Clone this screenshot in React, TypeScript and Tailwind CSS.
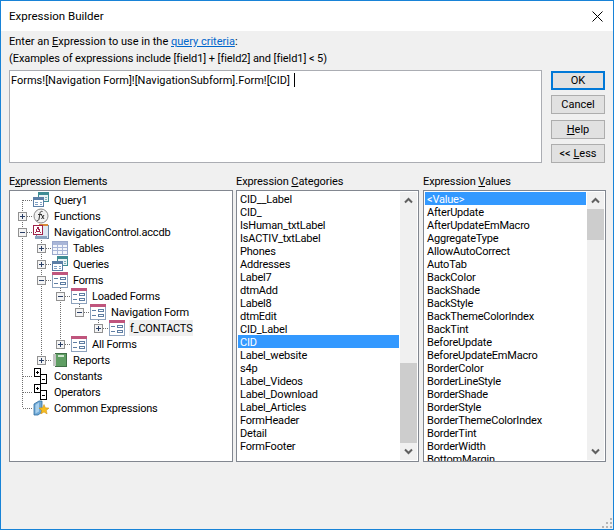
const fontStack = "font-['Roboto',sans-serif]";

const categories = [
  "CID__Label", "CID_", "IsHuman_txtLabel", "IsACTIV_txtLabel", "Phones", "Addresses", "Label7", "dtmAdd",
  "Label8", "dtmEdit", "CID_Label", "CID", "Label_website", "s4p", "Label_Videos", "Label_Download",
  "Label_Articles", "FormHeader", "Detail", "FormFooter",
];

const values = [
  "<Value>", "AfterUpdate", "AfterUpdateEmMacro", "AggregateType", "AllowAutoCorrect", "AutoTab", "BackColor",
  "BackShade", "BackStyle", "BackThemeColorIndex", "BackTint", "BeforeUpdate", "BeforeUpdateEmMacro", "BorderColor",
  "BorderLineStyle", "BorderShade", "BorderStyle", "BorderThemeColorIndex", "BorderTint", "BorderWidth", "BottomMargin",
];

type Kind = "query" | "fx" | "db" | "table" | "form" | "report" | "const" | "star";

const tree: { label: string; level: number; kind: Kind; exp?: "+" | "-"; active?: boolean }[] = [
  { label: "Query1", level: 0, kind: "query" },
  { label: "Functions", level: 0, kind: "fx", exp: "+" },
  { label: "NavigationControl.accdb", level: 0, kind: "db", exp: "-" },
  { label: "Tables", level: 1, kind: "table", exp: "+" },
  { label: "Queries", level: 1, kind: "query", exp: "+" },
  { label: "Forms", level: 1, kind: "form", exp: "-" },
  { label: "Loaded Forms", level: 2, kind: "form", exp: "-" },
  { label: "Navigation Form", level: 3, kind: "form", exp: "-" },
  { label: "f_CONTACTS", level: 4, kind: "form", exp: "+", active: true },
  { label: "All Forms", level: 2, kind: "form", exp: "+" },
  { label: "Reports", level: 1, kind: "report", exp: "+" },
  { label: "Constants", level: 0, kind: "const" },
  { label: "Operators", level: 0, kind: "const" },
  { label: "Common Expressions", level: 0, kind: "star" },
];

const indent = ["pl-[8px]", "pl-[27px]", "pl-[46px]", "pl-[65px]", "pl-[84px]"];

function Icon({ kind }: { kind: Kind }) {
  if (kind === "query") {
    return (
      <svg width="16" height="16" viewBox="0 0 16 16" shapeRendering="crispEdges">
        <rect x="5.5" y="0.5" width="10" height="9" fill="#eaf3f5" stroke="#3f8c94" />
        <rect x="6" y="1" width="9" height="2" fill="#3f8c94" />
        <path d="M12 5h2M12 7h2" stroke="#7fb0b6" />
        <rect x="0.5" y="5.5" width="10" height="9" fill="#fff" stroke="#5b7ea6" />
        <rect x="1" y="6" width="9" height="2" fill="#5b7ea6" />
        <path d="M2 10h3M7 10h2M2 12h3M7 12h2" stroke="#7fa0c4" />
      </svg>
    );
  }
  if (kind === "fx") {
    return (
      <svg width="16" height="16" viewBox="0 0 16 16">
        <circle cx="8" cy="8" r="7" fill="#f2f2f2" stroke="#8a8a8a" />
        <path d="M9.5 3.5C8 3 7.2 3.8 7 5.2L6 11c-.2 1.2-1 1.8-2.2 1.5M5 6.5h4M8.5 7l2.5 4M11 7l-2.5 4" fill="none" stroke="#333" strokeWidth="1" />
      </svg>
    );
  }
  if (kind === "db") {
    return (
      <svg width="16" height="16" viewBox="0 0 16 16" shapeRendering="crispEdges">
        <rect x="3.5" y="1.5" width="12" height="13" fill="#dfe8f2" stroke="#6d87a6" />
        <rect x="6" y="0" width="9" height="2" fill="#d98a3a" />
        <rect x="0.5" y="1.5" width="9" height="9" fill="#fff" stroke="#a0234a" />
        <path d="M2.5 9 5 3l2.5 6M3.5 7h3" fill="none" stroke="#a0234a" />
        <rect x="2" y="12" width="12" height="3" fill="#8aa3c0" />
      </svg>
    );
  }
  if (kind === "table") {
    return (
      <svg width="16" height="16" viewBox="0 0 16 16" shapeRendering="crispEdges">
        <rect x="0.5" y="1.5" width="15" height="13" fill="#f4f6fb" stroke="#9aa8cc" />
        <rect x="1" y="2" width="14" height="3" fill="#a9b6d8" />
        <path d="M5.5 2v12M10.5 2v12M1 7.5h14M1 10.5h14" stroke="#a9b6d8" />
      </svg>
    );
  }
  if (kind === "form") {
    return (
      <svg width="16" height="16" viewBox="0 0 16 16" shapeRendering="crispEdges">
        <rect x="0.5" y="0.5" width="15" height="15" fill="#fff" stroke="#8da2bd" />
        <rect x="0" y="0" width="16" height="3" fill="#c0557d" />
        <path d="M2 6.5h4M2 11.5h4" stroke="#5f7ea3" />
        <rect x="8.5" y="5.5" width="5" height="2" fill="#fff" stroke="#5f7ea3" />
        <rect x="8.5" y="10.5" width="5" height="2" fill="#fff" stroke="#5f7ea3" />
      </svg>
    );
  }
  if (kind === "report") {
    return (
      <svg width="16" height="16" viewBox="0 0 16 16" shapeRendering="crispEdges">
        <rect x="3.5" y="1.5" width="11" height="13" fill="#5f9e63" stroke="#3f6f45" />
        <rect x="1" y="2" width="3" height="12" fill="#c4c4c4" />
        <rect x="6" y="3" width="6" height="2" fill="#cfe6cf" />
      </svg>
    );
  }
  if (kind === "const") {
    return (
      <svg width="16" height="16" viewBox="0 0 16 16" shapeRendering="crispEdges">
        <rect x="1.5" y="0.5" width="6" height="8" fill="#fff" stroke="#000" />
        <path d="M3 4.5h3M4.5 3v3" stroke="#000" />
        <rect x="7.5" y="6.5" width="6" height="9" fill="#fff" stroke="#000" />
        <path d="M9 11.5h3" stroke="#000" />
      </svg>
    );
  }
  return (
    <svg width="16" height="16" viewBox="0 0 16 16">
      <path d="M1 4 6 1h3v11l-4 3H1z" fill="#6fa8d6" stroke="#2f6d9e" strokeWidth="0.8" />
      <path d="M2.5 5 6 2.5v9L2.5 13.5z" fill="#a9d0ec" />
      <path d="M11 4.5l1.4 3.3 3.6.3-2.7 2.3.8 3.5-3.1-1.9-3.1 1.9.8-3.5L6 8.1l3.6-.3z" fill="#f7bd1f" stroke="#c98a10" strokeWidth="0.5" />
    </svg>
  );
}

function Expander({ sign }: { sign?: "+" | "-" }) {
  if (!sign) return <span className="w-[9px] h-[9px] shrink-0" />;
  return (
    <svg width="9" height="9" viewBox="0 0 9 9" shapeRendering="crispEdges" className="shrink-0 relative">
      <rect x="0.5" y="0.5" width="8" height="8" fill="#f4f4f4" stroke="#919191" />
      <path d="M2 4.5h5" stroke="#2a3f66" />
      {sign === "+" && <path d="M4.5 2v5" stroke="#2a3f66" />}
    </svg>
  );
}

function TreeLines() {
  const dots = "#6f6f6f";
  const lines = [
    "M12.5 9v208",
    "M12.5 9.5h10M12.5 25.5h10M12.5 41.5h10M12.5 185.5h10M12.5 201.5h10M12.5 217.5h10",
    "M31.5 49v120",
    "M31.5 57.5h10M31.5 73.5h10M31.5 89.5h10M31.5 169.5h10",
    "M50.5 97v56",
    "M50.5 105.5h10M50.5 153.5h10",
    "M69.5 113v8",
    "M69.5 121.5h10",
    "M88.5 129v8",
    "M88.5 137.5h10",
  ];
  return (
    <svg width="140" height="230" className="absolute left-0 top-0" shapeRendering="crispEdges">
      {lines.map((d) => (
        <path key={d} d={d} stroke={dots} strokeDasharray="1 1" fill="none" />
      ))}
    </svg>
  );
}

function ScrollArrow({ up }: { up?: boolean }) {
  return (
    <div className="h-[17px] flex items-center justify-center shrink-0">
      <svg width="9" height="7" viewBox="0 0 9 7">
        <path d={up ? "M1 5.5 4.5 2 8 5.5" : "M1 1.5 4.5 5 8 1.5"} fill="none" stroke="#606060" strokeWidth="2" />
      </svg>
    </div>
  );
}

function ListBox({ items, selected, thumb }: { items: string[]; selected: string; thumb: "top" | "bottom" }) {
  return (
    <div className="h-[272px] w-[183px] shrink-0 border border-[#828790] bg-white flex overflow-hidden">
      <div className="flex-1 min-w-0 px-px pt-px overflow-hidden">
        {items.map((item) => (
          <div
            key={item}
            className={`h-[13px] leading-[15px] pl-[2px] whitespace-nowrap tracking-[-0.2px] ${item === selected ? "bg-[#3399ff] text-white" : ""}`}
          >
            {item}
          </div>
        ))}
      </div>
      <div className="w-[17px] my-px mr-px bg-[#f0f0f0] flex flex-col shrink-0">
        <ScrollArrow up />
        <div className={`flex-1 flex flex-col ${thumb === "top" ? "justify-start" : "justify-end"}`}>
          <div className={`bg-[#cdcdcd] ${thumb === "top" ? "h-[31px]" : "h-[80px]"}`} />
        </div>
        <ScrollArrow />
      </div>
    </div>
  );
}

function Btn({ children, primary, className = "" }: { children: React.ReactNode; primary?: boolean; className?: string }) {
  return (
    <button
      className={`w-[54px] h-[19px] bg-[#e1e1e1] flex items-center justify-center leading-none ${
        primary ? "border-2 border-[#0078d7]" : "border border-[#adadad]"
      } ${className}`}
    >
      {children}
    </button>
  );
}

export default function App() {
  return (
    <div className={`w-[614px] h-[530px] border border-[#1883d7] bg-[#f0f0f0] text-[11px] text-black overflow-hidden flex flex-col relative ${fontStack}`}>
      {/* Title bar */}
      <div className="h-[30px] bg-white flex items-center justify-between pl-[8px] pr-[10px] shrink-0">
        <span className="text-[11.5px] pt-px">Expression Builder</span>
        <svg width="11" height="11" viewBox="0 0 11 11">
          <path d="M.5.5l10 10M10.5.5l-10 10" stroke="#000" fill="none" />
        </svg>
      </div>

      <div className="flex-1 pl-[8px] pr-[7px] pt-[2px]">
        <div className="h-[17px] leading-[17px]">
          Enter an <span className="underline">E</span>xpression to use in the{" "}
          <span className="text-[#0066cc] underline">query criteria</span>:
        </div>
        <div className="h-[17px] leading-[17px] tracking-[-0.07px]">(Examples of expressions include [field1] + [field2] and [field1] &lt; 5)</div>

        {/* Editor and buttons */}
        <div className="flex gap-[9px] mt-[3px]">
          <div className="w-[533px] h-[93px] border border-[#abadb3] bg-white px-[1px] pt-[2px] leading-[16px]">
            Forms![Navigation Form]![NavigationSubform].Form![CID] <span className="inline-block w-px h-[14px] bg-black align-[-3px] ml-[1px]" />
          </div>
          <div className="flex flex-col pt-px">
            <Btn primary>OK</Btn>
            <Btn className="mt-[5px]">Cancel</Btn>
            <Btn className="mt-[6px]"><span><span className="underline">H</span>elp</span></Btn>
            <Btn className="mt-[5px]"><span>&lt;&lt; <span className="underline">L</span>ess</span></Btn>
          </div>
        </div>

        {/* Three panes */}
        <div className="flex mt-[10px]">
          <div className="w-[224px] mr-[3px] shrink-0">
            <div className="h-[17px] leading-[17px] tracking-[-0.2px]">E<span className="underline">x</span>pression Elements</div>
            <div className="relative h-[272px] border border-[#828790] bg-white pt-[1px]">
              <TreeLines />
              {tree.map((row) => (
                <div key={row.label} className={`relative h-[16px] flex items-center ${indent[row.level]}`}>
                  <Expander sign={row.exp} />
                  <span className="ml-[6px] mr-[4px] shrink-0 flex"><Icon kind={row.kind} /></span>
                  <span className={`h-[16px] leading-[18px] px-[1px] whitespace-nowrap tracking-[-0.2px] ${row.active ? "bg-[#f0f0f0]" : ""}`}>{row.label}</span>
                </div>
              ))}
            </div>
          </div>
          <div className="mr-[4px] shrink-0">
            <div className="h-[17px] leading-[17px] tracking-[-0.1px]">Expression <span className="underline">C</span>ategories</div>
            <ListBox items={categories} selected="CID" thumb="bottom" />
          </div>
          <div className="shrink-0">
            <div className="h-[17px] leading-[17px] tracking-[-0.1px]">Expression <span className="underline">V</span>alues</div>
            <ListBox items={values} selected="<Value>" thumb="top" />
          </div>
        </div>
      </div>

      {/* Resize grip */}
      <svg width="12" height="12" viewBox="0 0 12 12" className="absolute right-0 bottom-0" shapeRendering="crispEdges">
        <path d="M9 1h2v2H9zM5 5h2v2H5zM9 5h2v2H9zM1 9h2v2H1zM5 9h2v2H5zM9 9h2v2H9z" fill="#b5b5b5" />
      </svg>
    </div>
  );
}
